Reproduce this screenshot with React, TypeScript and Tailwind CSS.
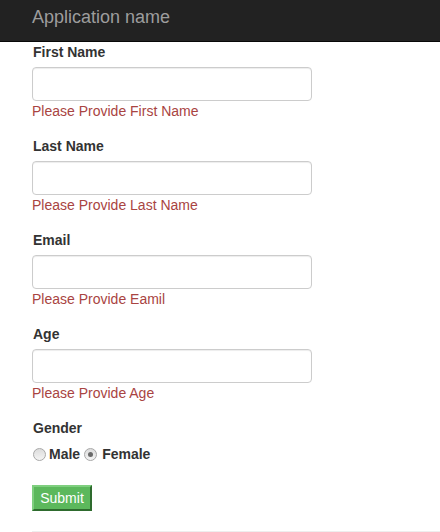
import React from "react";

const Field = ({ label, error }: { label: string; error: string }) => (
  <div className="mb-[15px]">
    <div className="text-[14px] leading-[20px] font-bold text-[#333] mb-[5px] pl-[1px]">{label}</div>
    <div className="w-[280px] h-[34px] border border-[#ccc] rounded-[4px] bg-white shadow-[inset_0_1px_1px_rgba(0,0,0,0.075)]" />
    <div className="text-[14px] leading-[20px] text-[#a94442]">{error}</div>
  </div>
);

const Radio = ({ checked }: { checked?: boolean }) => (
  <span className="inline-flex w-[13px] h-[13px] rounded-full border border-[#a8a8a8] bg-gradient-to-b from-[#dcdcdc] to-[#f4f4f4] items-center justify-center">
    {checked && <span className="w-[5px] h-[5px] rounded-full bg-[#6a6a6a]" />}
  </span>
);

export default function App() {
  return (
    <div className="w-[440px] h-[532px] bg-white overflow-hidden" style={{ fontFamily: '"Liberation Sans", Arial, sans-serif' }}>
      <div className="h-[42px] bg-[#222] border-b border-[#080808] px-[32px] pt-[7px]">
        <div className="text-[18px] leading-[20px] text-[#9d9d9d]">Application name</div>
      </div>
      <div className="px-[32px]">
        <Field label="First Name" error="Please Provide First Name" />
        <Field label="Last Name" error="Please Provide Last Name" />
        <Field label="Email" error="Please Provide Eamil" />
        <Field label="Age" error="Please Provide Age" />
        <div className="text-[14px] leading-[20px] font-bold text-[#333] pl-[1px]">Gender</div>
        <div className="flex items-center h-[20px] mt-[6px] text-[14px] font-bold text-[#333] pl-[1px]">
          <Radio />
          <span className="ml-[3px] mr-[4px]">Male</span>
          <Radio checked />
          <span className="ml-[5px]">Female</span>
        </div>
        <div className="mt-[21px] w-[60px] h-[26px] bg-[#5cb85c] border-2 border-t-[#7fcf7f] border-l-[#7fcf7f] border-r-[#2e6b2e] border-b-[#2e6b2e] text-white text-[14px] leading-[22px] flex items-center justify-center">
          Submit
        </div>
        <div className="mt-[20px] h-0 border-t border-[#eee] -mr-[32px]" />
      </div>
    </div>
  );
}
